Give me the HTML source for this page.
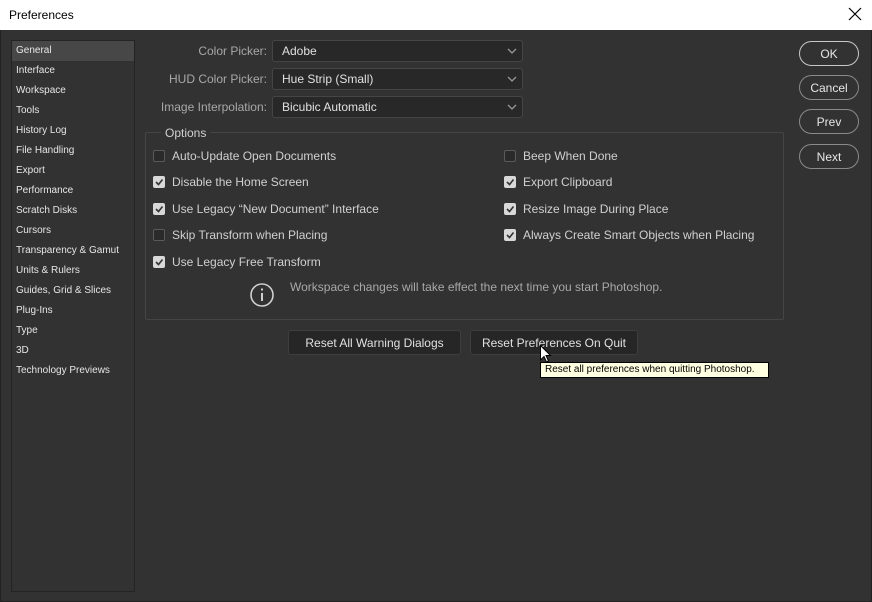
<!DOCTYPE html>
<html><head><style>
*{box-sizing:border-box;margin:0;padding:0}
body{width:872px;height:602px;background:#323232;font-family:"Liberation Sans",sans-serif;position:relative;overflow:hidden}
.title{position:absolute;left:0;top:0;width:872px;height:30px;background:#fff;color:#000;font-size:12px;line-height:30px;padding-left:9px}
.x{position:absolute;right:10px;top:7px;width:14px;height:14px}
.side{position:absolute;left:11px;top:40px;width:124px;height:552px;border:1px solid #242424;background:#323232}
.side div{height:20px;line-height:20px;font-size:10px;color:#e6e6e6;padding-left:4px}
.side .sel{background:#474747}
.t{position:absolute;color:#d0d0d0;font-size:12px;white-space:nowrap}
.lbl{color:#a8a8a8;text-align:right;width:120px}
.dd{position:absolute;left:272px;width:251px;height:22px;background:#282828;border:1px solid #454545;border-radius:3px;color:#e0e0e0;font-size:12px;line-height:21px;padding-left:9px}
.dd svg{position:absolute;right:5px;top:7px}
.grp{position:absolute;left:145px;top:132px;width:639px;height:188px;border:1px solid #454545;border-radius:2px}
.glab{position:absolute;left:161px;top:126px;background:#323232;padding:0 4px;color:#d0d0d0;font-size:12px}
.cb{position:absolute;width:12px;height:12px;border:1px solid #5a5a5a;border-radius:2px;background:#2a2a2a}
.cb.on{background:#d8d8d8;border-color:#d8d8d8}
.btn{position:absolute;height:25px;background:#262626;border:1px solid #3e3e3e;border-radius:3px;color:#e0e0e0;font-size:12px;line-height:24px;text-align:center}
.rb{position:absolute;left:799px;width:60px;height:25px;border:1px solid #8a8a8a;border-radius:13px;color:#e6e6e6;font-size:12px;line-height:24px;text-align:center}
.tip{position:absolute;left:540px;top:362px;width:229px;height:16px;background:#ffffe1;border:1px solid #000;font-size:10px;line-height:14px;color:#000;padding-left:4px;white-space:nowrap}
</style></head><body>
<div class="title">Preferences</div>
<div style="position:absolute;left:0;top:30px;width:1px;height:572px;background:#222"></div>
<div style="position:absolute;right:0;top:30px;width:1px;height:572px;background:#222"></div>
<div style="position:absolute;left:0;bottom:0;width:872px;height:1px;background:#222"></div>
<svg class="x" viewBox="0 0 14 14"><path d="M1 1L13 13M13 1L1 13" stroke="#000" stroke-width="1.2"/></svg>
<div class="side">
<div class="sel">General</div><div>Interface</div><div>Workspace</div><div>Tools</div><div>History Log</div><div>File Handling</div><div>Export</div><div>Performance</div><div>Scratch Disks</div><div>Cursors</div><div>Transparency &amp; Gamut</div><div>Units &amp; Rulers</div><div>Guides, Grid &amp; Slices</div><div>Plug-Ins</div><div>Type</div><div>3D</div><div>Technology Previews</div>
</div>
<div class="t lbl" style="left:147px;top:44px">Color Picker:</div>
<div class="t lbl" style="left:147px;top:72px">HUD Color Picker:</div>
<div class="t lbl" style="left:147px;top:100px">Image Interpolation:</div>
<div class="dd" style="top:40px">Adobe<svg width="10" height="6"><path d="M1 1L5 5L9 1" stroke="#999" fill="none" stroke-width="1.3"/></svg></div>
<div class="dd" style="top:68px">Hue Strip (Small)<svg width="10" height="6"><path d="M1 1L5 5L9 1" stroke="#999" fill="none" stroke-width="1.3"/></svg></div>
<div class="dd" style="top:96px">Bicubic Automatic<svg width="10" height="6"><path d="M1 1L5 5L9 1" stroke="#999" fill="none" stroke-width="1.3"/></svg></div>
<div class="grp"></div>
<div class="glab">Options</div>

<div class="cb" style="left:153px;top:150px"></div><div class="t" style="left:172px;top:149px">Auto-Update Open Documents</div>
<div class="cb on" style="left:153px;top:176px"></div><div class="t" style="left:172px;top:175px">Disable the Home Screen</div>
<div class="cb on" style="left:153px;top:203px"></div><div class="t" style="left:172px;top:202px">Use Legacy “New Document” Interface</div>
<div class="cb" style="left:153px;top:229px"></div><div class="t" style="left:172px;top:228px">Skip Transform when Placing</div>
<div class="cb on" style="left:153px;top:256px"></div><div class="t" style="left:172px;top:255px">Use Legacy Free Transform</div>

<div class="cb" style="left:504px;top:150px"></div><div class="t" style="left:523px;top:149px">Beep When Done</div>
<div class="cb on" style="left:504px;top:176px"></div><div class="t" style="left:523px;top:175px">Export Clipboard</div>
<div class="cb on" style="left:504px;top:203px"></div><div class="t" style="left:523px;top:202px">Resize Image During Place</div>
<div class="cb on" style="left:504px;top:229px"></div><div class="t" style="left:523px;top:228px">Always Create Smart Objects when Placing</div>

<svg style="position:absolute;left:0;top:0" width="872" height="602">
<g fill="none" stroke="#333" stroke-width="1.6">
<path d="M156 156.5L158.5 159L162.5 154" transform="translate(0,25.5)"/>
<path d="M156 156.5L158.5 159L162.5 154" transform="translate(0,52.5)"/>
<path d="M156 156.5L158.5 159L162.5 154" transform="translate(0,105.5)"/>
<path d="M507 156.5L509.5 159L513.5 154" transform="translate(0,25.5)"/>
<path d="M507 156.5L509.5 159L513.5 154" transform="translate(0,52.5)"/>
<path d="M507 156.5L509.5 159L513.5 154" transform="translate(0,78.5)"/>
</g>
<circle cx="262" cy="295" r="11" fill="none" stroke="#d0d0d0" stroke-width="1.6"/>
<rect x="261" y="293" width="2" height="8" fill="#d0d0d0"/><rect x="261" y="288.5" width="2" height="2" fill="#d0d0d0"/>
</svg>
<div class="t" style="left:290px;top:280px;color:#a8a8a8">Workspace changes will take effect the next time you start Photoshop.</div>

<div class="btn" style="left:288px;top:330px;width:173px">Reset All Warning Dialogs</div>
<div class="btn" style="left:470px;top:330px;width:168px">Reset Preferences On Quit</div>
<div class="tip">Reset all preferences when quitting Photoshop.</div>
<svg style="position:absolute;left:540px;top:345px" width="12" height="18"><path d="M0.5 0.5L0.5 15L4 11.5L6.5 17L8.5 16L6 10.5L10.5 10.5Z" fill="#fff" stroke="#000"/></svg>

<div class="rb" style="top:41px;border-color:#c8c8c8">OK</div>
<div class="rb" style="top:75px">Cancel</div>
<div class="rb" style="top:109px">Prev</div>
<div class="rb" style="top:144px">Next</div>
</body></html>
